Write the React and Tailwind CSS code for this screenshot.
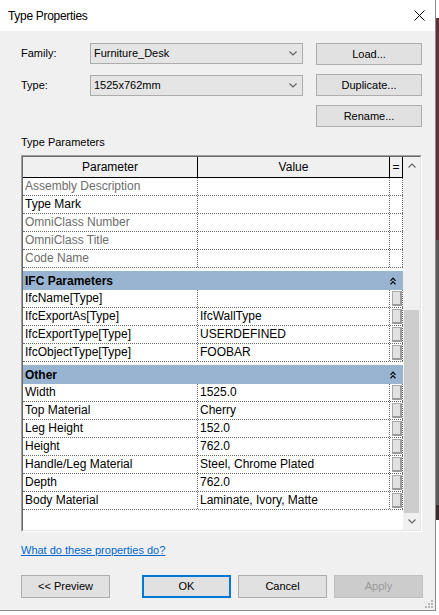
import React from "react";

const general = [
  { name: "Assembly Description", gray: true },
  { name: "Type Mark" },
  { name: "OmniClass Number", gray: true },
  { name: "OmniClass Title", gray: true },
  { name: "Code Name", gray: true },
];

const ifcParams = [
  ["IfcName[Type]", ""],
  ["IfcExportAs[Type]", "IfcWallType"],
  ["IfcExportType[Type]", "USERDEFINED"],
  ["IfcObjectType[Type]", "FOOBAR"],
];

const otherParams = [
  ["Width", "1525.0"],
  ["Top Material", "Cherry"],
  ["Leg Height", "152.0"],
  ["Height", "762.0"],
  ["Handle/Leg Material", "Steel, Chrome Plated"],
  ["Depth", "762.0"],
  ["Body Material", "Laminate, Ivory, Matte"],
];

function Chevron({ up, color = "#606060" }) {
  return (
    <svg width="8" height="5" viewBox="0 0 8 5">
      <path
        d={up ? "M0.5 4.5 L4 1 L7.5 4.5" : "M0.5 0.5 L4 4 L7.5 0.5"}
        fill="none"
        stroke={color}
        strokeWidth="1.1"
      />
    </svg>
  );
}

function DoubleUp() {
  return (
    <svg width="6" height="8" viewBox="0 0 6 8">
      <path
        d="M0.5 3.8 L3 1.2 L5.5 3.8 M0.5 7.3 L3 4.7 L5.5 7.3"
        fill="none"
        stroke="#000"
        strokeWidth="1.2"
      />
    </svg>
  );
}

function Row({ name, value, gray, btn }) {
  return (
    <div className="flex h-[18px] border-b border-dotted border-[#6a6a6a] bg-white text-[12px] leading-[17px]">
      <div
        className={`w-[175px] shrink-0 border-r border-dotted border-[#6a6a6a] pl-[2px] whitespace-nowrap overflow-hidden ${
          gray ? "text-[#6d6d6d]" : "text-black"
        }`}
      >
        {name}
      </div>
      <div className="w-[192px] shrink-0 border-r border-dotted border-[#6a6a6a] pl-[2px] whitespace-nowrap overflow-hidden">
        {value}
      </div>
      <div className="w-[13px] shrink-0 border-r border-dotted border-[#6a6a6a] flex items-center">
        {btn && (
          <div className="ml-[2px] w-[10px] h-[15px] bg-[#e1e1e1] border border-[#a8a8a8] border-r-2 border-b-2 border-r-[#9a9a9a] border-b-[#9a9a9a]"></div>
        )}
      </div>
    </div>
  );
}

function Group({ title }) {
  return (
    <div className="h-[22px] pt-[3px] bg-white">
      <div className="h-[19px] bg-[#99b4d1] flex items-center pl-[2px] pr-[7px] text-[12px] font-bold">
        <span>{title}</span>
        <span className="ml-auto flex">
          <DoubleUp />
        </span>
      </div>
    </div>
  );
}

function Btn({ children, primary, className = "" }) {
  return (
    <div
      className={`flex items-center justify-center bg-[#e1e1e1] text-[11px] ${
        primary ? "border-2 border-[#0078d7]" : "border border-[#adadad]"
      } ${className}`}
    >
      {children}
    </div>
  );
}

function Combo({ value, className = "" }) {
  return (
    <div
      className={`w-[213px] h-[21px] flex items-center bg-[#e5e5e5] border border-[#acacac] pl-[3px] pr-[5px] text-[11px] ${className}`}
    >
      <span>{value}</span>
      <span className="ml-auto flex">
        <Chevron />
      </span>
    </div>
  );
}

export default function App() {
  return (
    <div className="flex w-[439px] h-[615px] bg-white font-['Liberation_Sans',Arial,sans-serif] text-black overflow-hidden">
      <div className="relative w-[436px] h-[611px] shrink-0 flex flex-col bg-[#f0f0f0] border-r border-b border-[#8c8c8c]">
        {/* title bar */}
        <div className="h-[31px] bg-white flex items-center pl-[8px] pr-[10px]">
          <span className="text-[12px] tracking-[-0.3px]">Type Properties</span>
          <svg className="ml-auto" width="11" height="11" viewBox="0 0 11 11">
            <path d="M0.5 0.5 L10.5 10.5 M10.5 0.5 L0.5 10.5" stroke="#000" strokeWidth="1" />
          </svg>
        </div>

        <div className="flex flex-col pl-[21px] pt-[12px]">
          <div className="flex items-start">
            <div className="w-[69px] h-[21px] flex items-center text-[11px]">Family:</div>
            <Combo value="Furniture_Desk" />
            <Btn className="ml-[13px] w-[106px] h-[22px]">Load...</Btn>
          </div>
          <div className="flex items-start mt-[9px]">
            <div className="w-[69px] h-[21px] mt-[1px] flex items-center text-[11px]">Type:</div>
            <Combo value="1525x762mm" className="mt-[1px]" />
            <Btn className="ml-[13px] w-[106px] h-[22px]">Duplicate...</Btn>
          </div>
          <div className="flex mt-[9px]">
            <Btn className="ml-[295px] w-[106px] h-[22px]">Rename...</Btn>
          </div>
          <div className="mt-[8px] h-[14px] leading-[14px] text-[11px]">Type Parameters</div>

          {/* table frame */}
          <div className="mt-[6px] w-[401px] border border-[#a0a0a0] border-r-white border-b-white">
            <div className="flex h-[373px] border-t border-l border-[#696969] border-r border-b border-r-[#e3e3e3] border-b-[#e3e3e3] box-content">
              <div className="w-[380px] flex flex-col bg-white">
                <div className="flex h-[21px] shrink-0 border-b border-black bg-[#f0f0f0] text-[12px]">
                  <div className="w-[175px] border-r border-black flex items-center justify-center">Parameter</div>
                  <div className="w-[192px] border-r border-black flex items-center justify-center">Value</div>
                  <div className="w-[13px] border-r border-black flex items-center justify-center">=</div>
                </div>
                {general.map((r) => (
                  <Row key={r.name} name={r.name} gray={r.gray} />
                ))}
                <Group title="IFC Parameters" />
                {ifcParams.map(([n, v]) => (
                  <Row key={n} name={n} value={v} btn />
                ))}
                <Group title="Other" />
                {otherParams.map(([n, v]) => (
                  <Row key={n} name={n} value={v} btn />
                ))}
              </div>
              {/* scrollbar */}
              <div className="w-[17px] flex flex-col bg-[#f0f0f0]">
                <div className="h-[17px] flex items-center justify-center">
                  <Chevron up />
                </div>
                <div className="h-[136px]"></div>
                <div className="flex-1 ml-[1px] w-[15px] bg-[#cdcdcd]"></div>
                <div className="h-[17px] flex items-center justify-center">
                  <Chevron />
                </div>
              </div>
            </div>
          </div>

          <div className="mt-[11px] h-[14px] leading-[14px] text-[11px]">
            <span className="text-[#0066cc] underline">What do these properties do?</span>
          </div>

          <div className="mt-[18px] flex">
            <Btn className="w-[89px] h-[23px]">&lt;&lt; Preview</Btn>
            <Btn primary className="ml-[32px] w-[89px] h-[23px]">OK</Btn>
            <Btn className="ml-[7px] w-[89px] h-[23px]">Cancel</Btn>
            <div className="ml-[7px] w-[89px] h-[23px] flex items-center justify-center bg-[#cccccc] border border-[#bfbfbf] text-[11px] text-[#9a9a9a]">
              Apply
            </div>
          </div>
        </div>

        {/* resize grip */}
        <svg className="absolute right-[2px] bottom-[2px]" width="8" height="8" viewBox="0 0 8 8">
          <rect x="6" y="0" width="2" height="2" fill="#b8b8b8" />
          <rect x="3" y="3" width="2" height="2" fill="#b8b8b8" />
          <rect x="6" y="3" width="2" height="2" fill="#b8b8b8" />
          <rect x="0" y="6" width="2" height="2" fill="#b8b8b8" />
          <rect x="3" y="6" width="2" height="2" fill="#b8b8b8" />
          <rect x="6" y="6" width="2" height="2" fill="#b8b8b8" />
        </svg>
      </div>

      {/* desktop strip behind the dialog */}
      <div className="flex-1 flex flex-col">
        <div className="h-[18px] bg-white"></div>
        <div className="h-[222px] bg-[#5c3434]"></div>
        <div className="h-[265px] bg-[#5b5b5b]"></div>
        <div className="h-[15px] bg-[#3a2a2a]"></div>
        <div className="flex-1 bg-white"></div>
      </div>
    </div>
  );
}
